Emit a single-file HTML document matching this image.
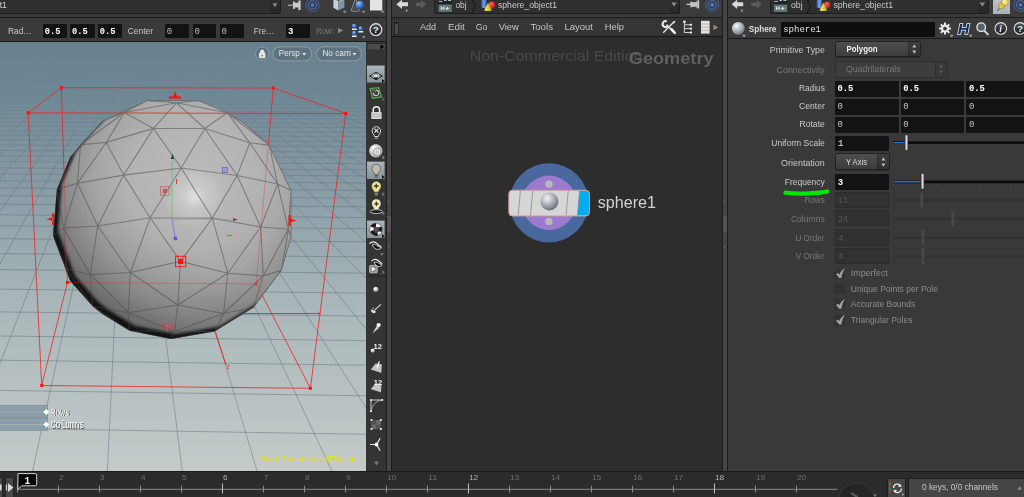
<!DOCTYPE html>
<html lang="en">
<head>
<meta charset="utf-8">
<title>Houdini - sphere1</title>
<style>
*{box-sizing:border-box;margin:0;padding:0}
html,body{width:1024px;height:497px;overflow:hidden;background:#1f1f1f}
body{position:relative;font-family:"Liberation Sans",sans-serif;font-size:9px;color:#cfcfcf;line-height:1}
.abs{position:absolute}
.t{position:absolute;white-space:nowrap;line-height:1}
.mono{font-family:"Liberation Mono",monospace}
.b{font-weight:bold}
.fld{position:absolute;background:#131313;border-radius:1px}
.pane{position:absolute;top:0;height:472px;overflow:hidden}
svg{will-change:transform}
#left{left:0;width:386px;background:#3a3a3a}
#mid{left:392px;width:330px;background:#2d2d2d}
#right{left:727px;width:297px;background:#3a3a3a}
.div{position:absolute;top:0;height:472px;background:#454545;border-left:1px solid #1c1c1c;border-right:1px solid #1c1c1c}
.row1{position:absolute;left:0;right:0;top:0;height:18px;background:#3b3b3b;border-bottom:1px solid #1d1d1d}
.path{position:absolute;top:-3px;height:16.600px;background:#2f2f2f;border:1px solid #1e1e1e;border-radius:2px}
.lbl{position:absolute;text-align:right;white-space:nowrap;color:#c8c8c8;font-size:9.5px}
.dim{color:#6d6d6d}
.dd{background:linear-gradient(#4e4e4e,#3d3d3d);border:1px solid #222;border-radius:2px;box-shadow:0 1px 0 #2a2a2a}
.dd i{position:absolute;top:0;bottom:0;right:0;background:rgba(0,0,0,.2);border-left:1px solid rgba(0,0,0,.2)}
.dd.off{background:#3d3d3d;border-color:#2e2e2e;box-shadow:none}
.dd.off i{background:rgba(0,0,0,.08)}
.fld.off{background:#313131;border:1px solid #2b2b2b}
.cb{width:10.600px;height:10.400px;background:#323232;border-radius:1px}
#timeline{position:absolute;left:0;top:471px;width:1024px;height:26px;background:#2b2b2b;border-top:1px solid #191919}
</style>
</head>
<body>

<!-- ================= LEFT PANE : scene viewer ================= -->
<div class="pane" id="left">
  <div class="row1"></div>
  <div class="path" style="left:-4px;width:284px"></div>
  <svg class="abs" style="left:0;top:0" width="20" height="14" viewBox="0 0 20 14"><text x="-0.300" y="8.200" font-family="Liberation Sans, sans-serif" font-size="9.500" fill="#d4d4d4" textLength="7.200" lengthAdjust="spacingAndGlyphs">t1</text></svg>
  <div class="abs" id="optrow" style="left:0;top:18px;width:386px;height:24px;background:#3a3a3a;border-bottom:1px solid #1b1b1b"></div>

  <div class="fld" style="left:43px;top:23.700px;width:24px;height:14.800px"></div>
  <div class="fld" style="left:70px;top:23.700px;width:24.600px;height:14.800px"></div>
  <div class="fld" style="left:98px;top:23.700px;width:24px;height:14.800px"></div>
  <div class="fld" style="left:165px;top:23.700px;width:23.800px;height:14.800px"></div>
  <div class="fld" style="left:192.600px;top:23.700px;width:23.600px;height:14.800px"></div>
  <div class="fld" style="left:219.500px;top:23.700px;width:24.400px;height:14.800px"></div>
  <div class="fld" style="left:286px;top:23.700px;width:24.300px;height:14.800px"></div>
  <svg class="abs" style="left:0;top:18px" width="340" height="24" viewBox="0 18 340 24" font-family="Liberation Sans, sans-serif" font-size="9.500">
    <text x="8" y="33.800" fill="#c8c8c8" textLength="23.600" lengthAdjust="spacingAndGlyphs">Rad…</text>
    <text x="127.800" y="33.800" fill="#c8c8c8" textLength="25.200" lengthAdjust="spacingAndGlyphs">Center</text>
    <text x="253.700" y="33.800" fill="#c8c8c8" textLength="20.700" lengthAdjust="spacingAndGlyphs">Fre…</text>
    <text x="316" y="33.600" fill="#787878" textLength="18" lengthAdjust="spacingAndGlyphs">Row:</text>
    <g font-family="Liberation Mono, monospace" font-size="9" font-weight="bold" fill="#fff">
      <text x="44.700" y="33.600" textLength="15.700" lengthAdjust="spacingAndGlyphs">0.5</text>
      <text x="72" y="33.600" textLength="15.700" lengthAdjust="spacingAndGlyphs">0.5</text>
      <text x="99.800" y="33.600" textLength="15.700" lengthAdjust="spacingAndGlyphs">0.5</text>
      <text x="288" y="33.600">3</text>
    </g>
    <g font-family="Liberation Mono, monospace" font-size="9" fill="#bdbdbd">
      <text x="166.800" y="33.600">0</text><text x="194.400" y="33.600">0</text><text x="221.600" y="33.600">0</text>
    </g>
  </svg>
  <div class="abs" style="left:269.400px;top:-3px;width:11.200px;height:16.600px;background:linear-gradient(#2e2e2e,#272727);border:1px solid #1c1c1c;border-left-color:#2a2a2a;border-radius:0 2px 2px 0"></div>
  <svg class="abs" style="left:260px;top:0" width="126" height="42" viewBox="260 0 126 42" font-family="Liberation Sans, sans-serif">
    <defs>
      <radialGradient id="bball" cx="0.35" cy="0.3" r="0.8"><stop offset="0" stop-color="#9cc4ff"/><stop offset="0.5" stop-color="#3f78d0"/><stop offset="1" stop-color="#173a80"/></radialGradient>
      <linearGradient id="qfill" x1="0" y1="0" x2="0" y2="1"><stop offset="0" stop-color="#515a62"/><stop offset="1" stop-color="#15181b"/></linearGradient>
    </defs>
    <path d="M272.500 3.200h4.800l-2.400 4z" fill="#8a8a8a"/>
    <!-- pin -->
    <path d="M288 5.200h5" stroke="#c8c8c8" stroke-width="1"/>
    <path d="M293 1.400h1.800v7.600h-1.800zM294.800 2.800h3.600v4.800h-3.600zM298.400 .4h2.200v9.600h-2.200z" fill="#cdcdcd"/>
    <!-- target -->
    <circle cx="312.500" cy="4.900" r="6.600" fill="none" stroke="#3f66a8" stroke-width="1"/>
    <circle cx="312.500" cy="4.900" r="4.200" fill="none" stroke="#4d78c0" stroke-width="1"/>
    <circle cx="312.500" cy="4.900" r="1.900" fill="#3f7be0"/>
    <!-- cube -->
    <path d="M333.400 -1l4.800 2.400v9l-4.800-2.600z" fill="#c4d2dc"/>
    <path d="M338.200 1.400l6.200-2.400v8.600l-6.200 2.800z" fill="#7f95a6"/>
    <path d="M333.400 -1l4.800 2.400l6.200-2.400" fill="none" stroke="#e4ecf0" stroke-width="0.600"/>
    <path d="M342.700 10.700h4l-2 2.600z" fill="#8c8c8c"/>
    <!-- cone + ball -->
    <path d="M355.600 -2l4 12.600c-2.400 1.400-6.400 1.400-8.600 0z" fill="#4a4a4a" stroke="#9a9a9a" stroke-width="0.800"/>
    <circle cx="359.900" cy="5" r="4.300" fill="url(#bball)"/>
    <path d="M361.500 10.700h4l-2 2.600z" fill="#8c8c8c"/>
    <!-- white pane -->
    <rect x="370" y="-1" width="12.300" height="11.500" fill="#e4e4e0"/>
    <path d="M380.600 10.700h4l-2 2.600z" fill="#8c8c8c"/>
    <!-- row 2 -->
    <path d="M338 28l5.300 2.600l-5.300 2.600z" fill="#858585"/>
    <g>
      <circle cx="354.300" cy="26.100" r="2.300" fill="url(#bball)"/><rect x="352" y="28.500" width="4.800" height="1.500" fill="#e8eef4"/>
      <circle cx="360.700" cy="28.600" r="2.300" fill="url(#bball)"/><rect x="358.400" y="31" width="4.800" height="1.500" fill="#e8eef4"/>
      <circle cx="354.300" cy="33.100" r="2.300" fill="url(#bball)"/><rect x="352" y="35.500" width="4.800" height="1.500" fill="#e8eef4"/>
    </g>
    <path d="M361.800 36.200h4l-2 2.600z" fill="#8c8c8c"/>
    <circle cx="375.900" cy="29.600" r="5.900" fill="url(#qfill)" stroke="#eaeaea" stroke-width="1.200"/>
    <text x="373.100" y="33.200" font-size="9.500" font-weight="bold" fill="#f2f2f2">?</text>
  </svg>
  <!-- viewport -->
  <svg class="abs" style="left:0;top:0" width="366" height="472" viewBox="0 0 366 472">
    <defs>
      <linearGradient id="bg" x1="0" y1="42" x2="0" y2="471" gradientUnits="userSpaceOnUse">
        <stop offset="0" stop-color="#66808f"/>
        <stop offset="0.25" stop-color="#7d939f"/>
        <stop offset="0.6" stop-color="#a9b6b9"/>
        <stop offset="1" stop-color="#c4cbc9"/>
      </linearGradient>
      <linearGradient id="gfade" x1="0" y1="62" x2="0" y2="230" gradientUnits="userSpaceOnUse">
        <stop offset="0" stop-color="#fff" stop-opacity="0"/>
        <stop offset="0.22" stop-color="#fff" stop-opacity="0.3"/>
        <stop offset="0.5" stop-color="#fff" stop-opacity="0.75"/>
        <stop offset="1" stop-color="#fff" stop-opacity="1"/>
      </linearGradient>
      <mask id="gm" maskUnits="userSpaceOnUse" x="0" y="42" width="366" height="430"><rect x="0" y="42" width="366" height="430" fill="url(#gfade)"/></mask>
      <radialGradient id="sph" cx="187" cy="188" r="160" gradientUnits="userSpaceOnUse">
        <stop offset="0" stop-color="#bcbcbc"/>
        <stop offset="0.4" stop-color="#b4b4b4"/>
        <stop offset="0.6" stop-color="#a7a7a7"/>
        <stop offset="0.8" stop-color="#8f8f8f"/>
        <stop offset="1" stop-color="#727272"/>
      </radialGradient>
      <linearGradient id="shd" x1="240" y1="140" x2="108" y2="332" gradientUnits="userSpaceOnUse">
        <stop offset="0" stop-color="#000" stop-opacity="0"/>
        <stop offset="0.5" stop-color="#000" stop-opacity="0.01"/>
        <stop offset="0.8" stop-color="#000" stop-opacity="0.08"/>
        <stop offset="1" stop-color="#000" stop-opacity="0.2"/>
      </linearGradient>
      <filter id="soft" x="-10%" y="-10%" width="120%" height="120%"><feGaussianBlur stdDeviation="1.400"/></filter>
      <radialGradient id="hl" cx="194.500" cy="197" r="32" gradientUnits="userSpaceOnUse">
        <stop offset="0" stop-color="#fff" stop-opacity="0.56"/>
        <stop offset="0.35" stop-color="#fff" stop-opacity="0.24"/>
        <stop offset="1" stop-color="#fff" stop-opacity="0"/>
      </radialGradient>
      <clipPath id="hullclip"><polygon points="53,235.7 56.8,189.5 70.3,157.1 80.5,144.8 102.7,121.1 147.1,100.6 199.2,100.7 227.3,112.7 242.1,121.5 269.4,145.4 291.1,190.5 291.2,237.1 281.5,270.2 253.5,307.5 214.5,331.4 171,339.1 129.6,330.7 102.4,313.9 92.6,306.2 70,280.7"/></clipPath>
      <clipPath id="vp"><rect x="0" y="42" width="366" height="429"/></clipPath>
    </defs>
    <g clip-path="url(#vp)">
      <rect x="0" y="42" width="366" height="430" fill="url(#bg)"/>
      <path mask="url(#gm)" d="M0.4 60L-2 60.4M4.4 60L-2 61.2M8.3 60L-2 62M12.3 60L-2 62.8M16.2 60L-2 63.7M20.2 60L-2 64.7M24.2 60L-2 65.8M28.1 60L-2 66.9M32.1 60L-2 68.1M36.1 60L-2 69.5M40 60L-2 70.9M44 60L-2 72.5M48 60L-2 74.3M51.9 60L-2 76.2M55.9 60L-2 78.4M59.9 60L-2 80.8M63.8 60L-2 83.5M67.8 60L-2 86.5M71.8 60L-2 90M75.7 60L-2 93.9M79.7 60L-2 98.6M83.7 60L-2 104M87.6 60L-2 110.6M91.6 60L-2 118.5M95.6 60L-2 128.3M99.5 60L-2 140.9M103.5 60L-2 157.4M107.5 60L-2 180.2M111.4 60L-2 213.7M115.4 60L-2 267.5M119.4 60L-2 368.5M123.3 60L32.3 472M127.3 60L107.3 472M131.2 60L182.3 472M135.2 60L257.3 472M139.2 60L332.3 472M143.1 60L368 410.7M147.1 60L368 331.5M151.1 60L368 280M155 60L368 243.8M159 60L368 217M163 60L368 196.4M166.9 60L368 180M170.9 60L368 166.7M174.9 60L368 155.6M178.8 60L368 146.3M182.8 60L368 138.3M186.8 60L368 131.4M190.7 60L368 125.4M194.7 60L368 120.1M198.7 60L368 115.4M202.6 60L368 111.2M206.6 60L368 107.5M210.6 60L368 104.1M214.5 60L368 101M218.5 60L368 98.2M222.5 60L368 95.6M226.4 60L368 93.2M230.4 60L368 91M234.4 60L368 89M238.3 60L368 87.1M242.3 60L368 85.4M246.2 60L368 83.8M250.2 60L368 82.2M254.2 60L368 80.8M258.1 60L368 79.5M262.1 60L368 78.2M266.1 60L368 77M270 60L368 75.9M274 60L368 74.8M278 60L368 73.8M281.9 60L368 72.9M285.9 60L368 72M289.9 60L368 71.1M293.8 60L368 70.3M297.8 60L368 69.5M301.8 60L368 68.8M305.7 60L368 68.1M309.7 60L368 67.4M0 107.2L366 108.3M0 110.6L366 111.7M0 114.3L366 115.5M0 118.1L366 119.3M0 122L366 123.3M0 126.3L366 127.7M0 130.8L366 132.2M0 135L366 136.5M0 139.9L366 141.5M0 144.9L366 146.6M0 150.5L366 152.2M0 156L366 157.8M0 161.8L366 163.7M0 167.9L366 169.9M0 173.9L366 176M0 180.8L366 183M0 188L366 190.3M0 195.7L366 198.1M0 204.2L366 206.8M0 214.8L366 217.5M0 225.8L366 228.7M0 238.7L366 241.8M0 253.6L366 256.9M0 269.6L366 273.2M0 289.2L366 293.1M0 311.9L366 316.1M0 336L366 340.6M0 360.2L366 365.2M0 390.4L366 395.8M0 428.3L366 434.3M0 475L366 481.7M0 103.9L366 104.9M0 100.8L366 101.8M0 97.9L366 98.8M0 95.1L366 96M0 92.6L366 93.4M0 90.1L366 91M0 87.9L366 88.6M0 85.7L366 86.5M0 83.7L366 84.4M0 81.8L366 82.5M0 80L366 80.7M0 78.4L366 79M0 76.8L366 77.4M0 75.3L366 75.9M0 73.9L366 74.5M0 72.6L366 73.2" stroke="#5c6e78" stroke-opacity="0.46" stroke-width="1" fill="none"/>
      <path d="M61.4 87.7L273.3 88M273.3 88L345.7 113.5M345.7 113.5L28.2 112.8M28.2 112.8L61.4 87.7M67.4 282.5L256.3 283.9M256.3 283.9L310.4 388.3M310.4 388.3L41.7 385.5M41.7 385.5L67.4 282.5M61.4 87.7L67.4 282.5M273.3 88L256.3 283.9M345.7 113.5L310.4 388.3M28.2 112.8L41.7 385.5" stroke="#ee2020" stroke-opacity="0.92" stroke-width="0.85" fill="none"/>
      <!-- floor axis lines -->
      <path d="M171 313.5H319.5M202 292L226 365" stroke="#f02020" stroke-width="0.9" fill="none"/>
      <polygon points="53,235.7 56.8,189.5 70.3,157.1 80.5,144.8 102.7,121.1 147.1,100.6 199.2,100.7 227.3,112.7 242.1,121.5 269.4,145.4 291.1,190.5 291.2,237.1 281.5,270.2 253.5,307.5 214.5,331.4 171,339.1 129.6,330.7 102.4,313.9 92.6,306.2 70,280.7" fill="#161616"/>
      <g clip-path="url(#hullclip)">
        <g filter="url(#soft)">
          <polygon points="53,235.7 56.8,189.5 70.3,157.1 80.5,144.8 102.7,121.1 147.1,100.6 199.2,100.7 227.3,112.7 242.1,121.5 269.4,145.4 291.1,190.5 291.2,237.1 281.5,270.2 253.5,307.5 214.5,331.4 171,339.1 129.6,330.7 102.4,313.9 92.6,306.2 70,280.7" fill="url(#sph)" transform="translate(12 -12)"/>
          <polygon points="53,235.7 56.8,189.5 70.3,157.1 80.5,144.8 102.7,121.1 147.1,100.6 199.2,100.7 227.3,112.7 242.1,121.5 269.4,145.4 291.1,190.5 291.2,237.1 281.5,270.2 253.5,307.5 214.5,331.4 171,339.1 129.6,330.7 102.4,313.9 92.6,306.2 70,280.7" fill="url(#sph)" transform="translate(5 -5)"/>
        </g>
        <polygon points="53,235.7 56.8,189.5 70.3,157.1 80.5,144.8 102.7,121.1 147.1,100.6 199.2,100.7 227.3,112.7 242.1,121.5 269.4,145.4 291.1,190.5 291.2,237.1 281.5,270.2 253.5,307.5 214.5,331.4 171,339.1 129.6,330.7 102.4,313.9 92.6,306.2 70,280.7" fill="url(#shd)"/>
        <polygon points="53,235.7 56.8,189.5 70.3,157.1 80.5,144.8 102.7,121.1 147.1,100.6 199.2,100.7 227.3,112.7 242.1,121.5 269.4,145.4 291.1,190.5 291.2,237.1 281.5,270.2 253.5,307.5 214.5,331.4 171,339.1 129.6,330.7 102.4,313.9 92.6,306.2 70,280.7" fill="url(#hl)"/>
        <path d="M281.5 270.2L253.5 307.5M281.5 270.2L263.2 275.9M281.5 270.2L288.4 229.3M281.5 270.2L291.2 237.1M253.5 307.5L214.5 331.4M253.5 307.5L263.2 275.9M253.5 307.5L223.6 313.5M214.5 331.4L171 339.1M214.5 331.4L223.6 313.5M214.5 331.4L174.4 331.5M171 339.1L174.4 331.5M171 339.1L129.6 330.7M263.2 275.9L223.6 313.5M263.2 275.9L227.8 273.2M263.2 275.9L288.4 229.3M263.2 275.9L260.7 227M223.6 313.5L174.4 331.5M223.6 313.5L227.8 273.2M223.6 313.5L177.8 305M174.4 331.5L177.8 305M174.4 331.5L129.6 330.7M174.4 331.5L128.1 312.7M227.8 273.2L177.8 305M227.8 273.2L180.4 261.4M227.8 273.2L260.7 227M227.8 273.2L212.3 218.1M177.8 305L180.4 261.4M177.8 305L128.1 312.7M177.8 305L130.4 272.5M180.4 261.4L130.4 272.5M180.4 261.4L212.3 218.1M180.4 261.4L150.1 217.8M66.1 268.7L92.6 306.2M66.1 268.7L90.3 274.7M66.1 268.7L63.6 228M66.1 268.7L70 280.7M66.1 268.7L53 235.7M92.6 306.2L129.6 330.7M92.6 306.2L90.3 274.7M92.6 306.2L128.1 312.7M92.6 306.2L70 280.7M92.6 306.2L102.4 313.9M129.6 330.7L128.1 312.7M129.6 330.7L102.4 313.9M90.3 274.7L128.1 312.7M90.3 274.7L130.4 272.5M90.3 274.7L63.6 228M90.3 274.7L97.7 226M128.1 312.7L130.4 272.5M130.4 272.5L150.1 217.8M130.4 272.5L97.7 226M249.8 142.8L277.6 184M249.8 142.8L237.1 175.5M249.8 142.8L204.8 128.5M249.8 142.8L269.4 145.4M249.8 142.8L227.3 112.7M277.6 184L288.4 229.3M277.6 184L237.1 175.5M277.6 184L260.7 227M277.6 184L269.4 145.4M277.6 184L291.1 190.5M288.4 229.3L260.7 227M288.4 229.3L291.1 190.5M288.4 229.3L291.2 237.1M237.1 175.5L260.7 227M237.1 175.5L212.3 218.1M237.1 175.5L204.8 128.5M237.1 175.5L181.2 168M260.7 227L212.3 218.1M212.3 218.1L181.2 168M212.3 218.1L150.1 217.8M106.3 142.4L153.5 128.4M106.3 142.4L123.6 175.1M106.3 142.4L77.5 183.2M106.3 142.4L124.3 112.5M106.3 142.4L80.5 144.8M153.5 128.4L204.8 128.5M153.5 128.4L123.6 175.1M153.5 128.4L181.2 168M153.5 128.4L124.3 112.5M153.5 128.4L176.4 102.8M204.8 128.5L181.2 168M204.8 128.5L176.4 102.8M204.8 128.5L227.3 112.7M123.6 175.1L181.2 168M123.6 175.1L150.1 217.8M123.6 175.1L77.5 183.2M123.6 175.1L97.7 226M181.2 168L150.1 217.8M150.1 217.8L97.7 226M63.6 228L77.5 183.2M63.6 228L97.7 226M63.6 228L53 235.7M63.6 228L56.8 189.5M77.5 183.2L97.7 226M77.5 183.2L56.8 189.5M77.5 183.2L80.5 144.8M70 280.7L53 235.7M269.4 145.4L291.1 190.5M269.4 145.4L227.3 112.7M269.4 145.4L242.1 121.5M291.1 190.5L291.2 237.1M147.1 100.6L124.3 112.5M147.1 100.6L199.2 100.7M147.1 100.6L176.4 102.8M147.1 100.6L102.7 121.1M124.3 112.5L176.4 102.8M124.3 112.5L80.5 144.8M124.3 112.5L102.7 121.1M199.2 100.7L176.4 102.8M199.2 100.7L227.3 112.7M176.4 102.8L227.3 112.7M227.3 112.7L242.1 121.5M53 235.7L56.8 189.5M70.3 157.1L56.8 189.5M70.3 157.1L80.5 144.8M56.8 189.5L80.5 144.8M80.5 144.8L102.7 121.1" stroke="#4a4a4a" stroke-opacity="0.5" stroke-width="1.100" fill="none"/>
      </g>
      <!-- hidden box lines seen through -->
      <g clip-path="url(#hullclip)">
        <path d="M61.4 87.7L273.3 88M67.4 282.5L256.3 283.9M256.3 283.9L310.4 388.3M41.7 385.5L67.4 282.5M61.4 87.7L67.4 282.5M273.3 88L256.3 283.9" stroke="#ee2020" stroke-opacity="0.36" stroke-width="0.9" fill="none"/>
        <path d="M345.7 113.5L28.2 112.8M345.7 113.5L310.4 388.3M28.2 112.8L41.7 385.5M310.4 388.3L41.7 385.5M273.3 88L345.7 113.5M61.4 87.7L28.2 112.8" stroke="#ee2020" stroke-opacity="0.92" stroke-width="0.85" fill="none"/>
      </g>
      <g fill="#ff1010"><rect x="59.9" y="86.2" width="3" height="3"/><rect x="271.8" y="86.5" width="3" height="3"/><rect x="344.2" y="112" width="3" height="3"/><rect x="26.7" y="111.3" width="3" height="3"/><rect x="65.9" y="281" width="3" height="3"/><rect x="254.8" y="282.4" width="3" height="3" fill-opacity="0.4"/><rect x="308.9" y="386.8" width="3" height="3"/><rect x="40.2" y="384" width="3" height="3"/></g>
      <text x="318" y="314.5" font-size="6" fill="#f03030" font-family="Liberation Sans, sans-serif">x</text>
      <text x="226.5" y="369" font-size="6.5" fill="#f03030" font-family="Liberation Sans, sans-serif">z</text>
      <!-- box handles -->
      <g fill="#ff1010">
        <path d="M169 96.4h12v2.2h-12zM172.4 97c1.8-1.6 2.4-4 2.8-6.8c.4 2.800 1 5.200 2.800 6.800z"/>
        <path d="M52 213.200h2.200v11.800h-2.200zM52.600 216.600c-1.600 1.600-4 2.200-6.800 2.600c2.800.4 5.200 1 6.800 2.600z"/>
        <path d="M288.600 215h2v11h-2zM290 217.800c1.600 1.600 4 2.200 7 2.600c-3 .4-5.400 1-7 2.600z"/>
        <path d="M178 258.800h5.200v5.200h-5.200z"/>
      </g>
      <rect x="175.500" y="256.300" width="10.200" height="10.400" fill="none" stroke="#ff1818" stroke-width="1"/>
      <g opacity="0.55">
        <rect x="162.500" y="188.700" width="4.600" height="4.600" fill="#c02020"/>
        <rect x="160.500" y="186.700" width="8.600" height="8.600" fill="none" stroke="#d03030" stroke-width="0.9"/>
        <rect x="162.700" y="324.300" width="9.800" height="4" fill="none" stroke="#e83a3a" stroke-width="0.700"/><path d="M165 325.200h5v2.300h-5zM165.600 328.300h3.800l-1.900 4.200z" fill="#ff4a4a"/>
      </g>
      <!-- transform gizmo -->
      <path d="M172 219.500V159" stroke="#48b848" stroke-opacity="0.6" stroke-width="0.9" fill="none"/>
      <path d="M172.600 153.500l1.600 5.500h-3.600z" fill="#1f4f1f"/>
      <path d="M172 219.500L233 219.400" stroke="#d87070" stroke-opacity="0.5" stroke-width="0.9" fill="none"/>
      <path d="M233 218.200l5 1.400l-5 1.400z" fill="#8a3030"/>
      <path d="M172 219.500L175.300 237.500" stroke="#6a6ae0" stroke-opacity="0.8" stroke-width="0.9" fill="none"/>
      <rect x="173.700" y="236.800" width="3.400" height="3.400" fill="#5a5ad0"/>
      <rect x="222.300" y="167.500" width="5" height="5" fill="#8080d8" fill-opacity="0.45" stroke="#6868c8" stroke-width="0.8"/>
      <path d="M176.600 178.800v5.400" stroke="#d03838" stroke-width="1"/>
      <path d="M226.800 235.500h5.600" stroke="#38b838" stroke-width="1.200"/>
      <!-- rows / columns HUD sliders -->
      <rect x="-1" y="405.500" width="48.500" height="12.400" fill="#8a9fab" stroke="#8c8c8c" stroke-width="0.8"/>
      <rect x="-1" y="417.900" width="48.500" height="12.400" fill="#8a9fab" stroke="#8c8c8c" stroke-width="0.8"/>
      <path d="M0 412H46M0 424.500H46" stroke="#a9aeb0" stroke-width="1.200"/>
      <path d="M43.300 412l3-3l3 3l-3 3zM43.300 424.500l3-3l3 3l-3 3z" fill="#fff"/>
      <g font-family="Liberation Mono, monospace" font-size="10">
        <text x="51.700" y="416.300" fill="#3c3c3c" textLength="18.700" lengthAdjust="spacingAndGlyphs">Rows</text><text x="51" y="415.600" fill="#fff" textLength="18.700" lengthAdjust="spacingAndGlyphs">Rows</text>
        <text x="51.700" y="428.600" fill="#3c3c3c" textLength="33.400" lengthAdjust="spacingAndGlyphs">Columns</text><text x="51" y="427.900" fill="#fff" textLength="33.400" lengthAdjust="spacingAndGlyphs">Columns</text>
      </g>
      <text x="261.700" y="462" font-size="9" fill="#e6e600" font-family="Liberation Sans, sans-serif" textLength="94.500" lengthAdjust="spacingAndGlyphs">Non-Commercial Edition</text>
      <!-- view buttons -->
      <circle cx="262.200" cy="53.700" r="6.700" fill="#5c707d" stroke="#8d9ca6" stroke-width="0.9"/>
      <path d="M259.400 53.200h5.600v4.600h-5.600zM260.400 53.200v-1.400a1.800 1.800 0 0 1 3.600 0v1.400" fill="#e4e8ea" stroke="#e4e8ea" stroke-width="0.9" fill-rule="evenodd"/>
      <path d="M261.600 54.400l1.800 1.200l-1.800 1.200z" fill="#5c707d"/>
      <rect x="273" y="46.800" width="38.600" height="14" rx="7" fill="#5e727f" stroke="#93a2ab" stroke-width="0.9"/>
      <rect x="316.600" y="46.800" width="45" height="14" rx="7" fill="#5e727f" stroke="#93a2ab" stroke-width="0.9"/>
      <g font-family="Liberation Sans, sans-serif" font-size="9" fill="#e2e7ea">
        <text x="278.800" y="56.300" textLength="21" lengthAdjust="spacingAndGlyphs">Persp</text>
        <text x="322.400" y="56.300" textLength="28.400" lengthAdjust="spacingAndGlyphs">No cam</text>
      </g>
      <path d="M302.200 53h4l-2 2.400zM352.400 53h4l-2 2.400z" fill="#e2e7ea"/>
    </g>
  </svg>

  <div class="abs" id="vtools" style="left:366px;top:42px;width:20px;height:430px;background:#343434"></div>
  <svg class="abs" style="left:366px;top:42px" width="20" height="430" viewBox="366 42 20 430">
    <defs>
      <linearGradient id="hib" x1="0" y1="0" x2="0" y2="1"><stop offset="0" stop-color="#aab6ba"/><stop offset="1" stop-color="#87949a"/></linearGradient>
      <radialGradient id="ball" cx="0.35" cy="0.3" r="0.8"><stop offset="0" stop-color="#ffffff"/><stop offset="1" stop-color="#9a9a9a"/></radialGradient>
    </defs>
    <!-- top scroll nub -->
    <rect x="367" y="43.500" width="18.500" height="6.500" fill="#4a4a4a" stroke="#222" stroke-width="0.6"/>
    <path d="M380.500 44.300l3.600 2.500l-3.600 2.500z" fill="#000"/>
    <!-- 1 construction plane (active) -->
    <rect x="367" y="65.500" width="17.600" height="17" fill="url(#hib)"/>
    <path d="M369.500 76l6.500-3.600l6.500 3.600l-6.500 3.600z" fill="none" stroke="#1a1a1a" stroke-width="1"/>
    <path d="M372.700 74.200l6.500 3.600M379.300 74.200l-6.500 3.600" stroke="#f4f4f4" stroke-width="0.8"/>
    <path d="M374 77.600l2 1.400l2-1.400" stroke="#111" stroke-width="1.200" fill="none"/>
    <path d="M382 79l2.600 2l-2.600 2z" fill="#111"/>
    <!-- 2 green snap -->
    <path d="M370.200 88.600l8.400-1l2.800 9.400l-8.800 1.200z" fill="none" stroke="#58a848" stroke-width="1.300"/>
    <path d="M373.300 92.800a2.700 2.700 0 1 0 2.700-2.600" fill="none" stroke="#c8c8c8" stroke-width="1.300"/>
    <path d="M371.800 90.200h3.400v2.600" fill="none" stroke="#8a8a8a" stroke-width="1"/>
    <path d="M382.300 97.200l2.500 2l-2.500 2z" fill="#666"/>
    <!-- 3 lock -->
    <path d="M373.200 112.500v-2.500a3.200 3.200 0 0 1 6.400 0v2.500" fill="none" stroke="#f2f2f2" stroke-width="1.500"/>
    <rect x="371.200" y="112" width="10.400" height="7" rx="0.800" fill="#d6d6d0"/>
    <path d="M371.200 114.400h10.400M371.200 116.600h10.400" stroke="#a8a8a0" stroke-width="0.700"/>
    <!-- 4 bulb X -->
    <path d="M374.500 136.500c0-2-2.300-2.800-2.300-5.600a4.200 4.200 0 0 1 8.400 0c0 2.800-2.300 3.600-2.300 5.600z" fill="#2a2a2a" stroke="#dcdcdc" stroke-width="1"/>
    <path d="M374.400 128.600l4 4M378.400 128.600l-4 4" stroke="#f0f0f0" stroke-width="1.100"/>
    <path d="M374.700 138.200h3.400" stroke="#bbb" stroke-width="1"/>
    <!-- 5 sphere eye -->
    <circle cx="375.800" cy="150.800" r="6.300" fill="url(#ball)" stroke="#e8e8e8" stroke-width="0.600"/>
    <circle cx="377.200" cy="151.800" r="3.700" fill="#f2f2f2" stroke="#777" stroke-width="0.700"/>
    <path d="M376.200 149.800v4M378.200 149.800v4" stroke="#888" stroke-width="0.700"/>
    <path d="M382.300 155.500l2.500 2l-2.500 2z" fill="#888"/>
    <!-- 6 bulb (active) -->
    <rect x="367" y="161.600" width="17.600" height="17.400" fill="url(#hib)"/>
    <path d="M374.400 174.300c0-2-2.400-2.900-2.400-5.700a4.300 4.300 0 0 1 8.600 0c0 2.800-2.400 3.700-2.400 5.700z" fill="#bcbcac" stroke="#55554c" stroke-width="0.700"/>
    <path d="M374.600 175.600h3.600M374.900 177h3" stroke="#4a4a44" stroke-width="0.900"/>
    <path d="M382 175l2.600 2l-2.600 2z" fill="#111"/>
    <!-- 7 yellow bulb -->
    <path d="M374.400 191.600c0-1.800-2.400-2.700-2.400-5.500a4.300 4.300 0 0 1 8.600 0c0 2.800-2.400 3.700-2.400 5.500z" fill="#ece48a" stroke="#f4f0b0" stroke-width="0.500"/>
    <path d="M374 186h4.600M376.300 183.700v4.600" stroke="#3a3a2a" stroke-width="1.300"/>
    <path d="M374.600 193.200h3.600M374.900 194.800h3" stroke="#aaa" stroke-width="0.900"/>
    <path d="M382.300 192.200l2.500 2l-2.500 2z" fill="#777"/>
    <!-- 8 bulb + ring -->
    <path d="M374.400 209c0-1.800-2.200-2.700-2.200-5.300a4.100 4.100 0 0 1 8.200 0c0 2.600-2.200 3.500-2.200 5.300z" fill="#eeeab0" stroke="#fafadc" stroke-width="0.500"/>
    <path d="M374.200 203.800h4.400M376.400 201.600v4.400" stroke="#333" stroke-width="1.300"/>
    <ellipse cx="376.300" cy="211.600" rx="6.200" ry="1.900" fill="#1a1a1a" stroke="#cfcfcf" stroke-width="0.900"/>
    <path d="M382.500 211.300l2.400 2l-2.400 2z" fill="#888"/>
    <!-- 9 checker sphere (active) -->
    <rect x="367" y="220.600" width="17.600" height="17.400" fill="url(#hib)"/>
    <circle cx="376" cy="229.500" r="6.300" fill="#f4f4f4" stroke="#333" stroke-width="0.500"/>
    <path d="M376 223.200a6.300 6.300 0 0 0-5.500 3.200l3.500 1.400l2-1.200zM381.500 226.400a6.300 6.300 0 0 1 .3 5.400l-3.300-.6v-3.800zM370.300 231.800a6.300 6.300 0 0 0 4.300 3.800l.4-3.400l-2-2.200zM378 235.400l-.5-3.200l-2.500 0l-.4 3.400a6.300 6.300 0 0 0 3.400-.2z" fill="#1a1a1a"/>
    <rect x="374" y="227.300" width="4.600" height="4.600" fill="#555" stroke="#222" stroke-width="0.500"/>
    <path d="M382 234.200l2.600 2l-2.600 2z" fill="#111"/>
    <!-- 10 glasses -->
    <path d="M369.500 243.800c1-1.800 4-2.400 6-1.200l6 4.800" fill="none" stroke="#ececec" stroke-width="1.200"/>
    <path d="M372 245c1.400-.8 3.400-.6 4.600.6l4.800 2.200c-1.200 1.800-4.600 2-6.400.8z" fill="#0c0c0c" stroke="#e8e8e8" stroke-width="0.800"/>
    <path d="M379.600 253.200h4.600l-2.300 2.600z" fill="#777"/>
    <!-- 11 glasses + flipbook -->
    <path d="M371.500 261.200c1-1.800 4-2.400 6-1.200l4.600 3.800" fill="none" stroke="#ececec" stroke-width="1.200"/>
    <path d="M374 262.600c1.400-.8 3.200-.6 4.400.6l3.800 1.800c-1.200 1.800-4 2-5.800.8z" fill="#0c0c0c" stroke="#e8e8e8" stroke-width="0.800"/>
    <rect x="369.600" y="265.400" width="7.600" height="7.400" rx="0.800" fill="#8e8e8e" stroke="#d8d8d8" stroke-width="0.700"/>
    <path d="M371.800 266.900l3.800 2.200l-3.800 2.200z" fill="#fff"/>
    <path d="M382.400 270.300l2.500 2l-2.500 2z" fill="#777"/>
    <path d="M367 276h19" stroke="#242424" stroke-width="1"/>
    <!-- 12 point -->
    <circle cx="375.800" cy="289.300" r="2.500" fill="url(#ball)"/>
    <!-- 13 normal -->
    <path d="M374.200 310.400l6.800-6" stroke="#e0e0e0" stroke-width="1.100"/>
    <path d="M371.600 309.200a2.600 2.600 0 0 0 4.600 2.600z" fill="#e4e4e4"/>
    <path d="M372 309a2.800 2.800 0 0 1 2-1.200" stroke="#bbb" stroke-width="0.800" fill="none"/>
    <!-- 14 pen -->
    <path d="M372.400 333.400l4.200-7.400l2.800 1.800z" fill="#c8c8c8"/>
    <circle cx="378.600" cy="325" r="2.100" fill="#f6f6f6"/>
    <!-- 15 point numbers -->
    <circle cx="372.700" cy="350.600" r="2.100" fill="url(#ball)"/>
    <text x="373.600" y="348.800" font-family="Liberation Sans, sans-serif" font-weight="bold" font-size="7.500" fill="#f4f4f4" textLength="8.400" lengthAdjust="spacingAndGlyphs">12</text>
    <!-- 16 prim normal -->
    <path d="M371 369.200l4.600-5.600l5.800 .6l-.4 8.200z" fill="#c4c4c0"/>
    <path d="M371 369.200l10 3.200l.4-8.200" fill="none" stroke="#e8e8e8" stroke-width="0.500"/>
    <path d="M377 368.400l2.200-7" stroke="#fff" stroke-width="1.300"/>
    <!-- 17 prim numbers -->
    <path d="M371 388.800l4.600-5.400l5.800 .6l-.4 8z" fill="#c4c4c0"/>
    <path d="M371 388.800l10 3.200" fill="none" stroke="#e8e8e8" stroke-width="0.500"/>
    <text x="373.800" y="385" font-family="Liberation Sans, sans-serif" font-weight="bold" font-size="7.500" fill="#f4f4f4" textLength="8.400" lengthAdjust="spacingAndGlyphs">12</text>
    <!-- 18 hull -->
    <path d="M371 411.500v-11.500h11.500" fill="none" stroke="#c9c9c9" stroke-width="1"/>
    <path d="M382.500 400c-6.500 .800-10.500 5-11.500 11.500" fill="none" stroke="#b5b5b5" stroke-width="0.900"/>
    <g fill="#f0f0f0"><circle cx="371" cy="400" r="1"/><circle cx="382.300" cy="400" r="1"/><circle cx="371" cy="411.300" r="1"/></g>
    <!-- 19 uv -->
    <rect x="371.500" y="420" width="9.400" height="9" fill="#6a6d66"/>
    <rect x="371.500" y="420" width="4.700" height="4.500" fill="#50524e"/><rect x="376.200" y="424.500" width="4.700" height="4.500" fill="#50524e"/>
    <g fill="#f4f4f4"><circle cx="371.500" cy="420" r="1.100"/><circle cx="380.900" cy="420" r="1.100"/><circle cx="371.500" cy="429" r="1.100"/><circle cx="380.900" cy="429" r="1.100"/></g>
    <!-- 20 -->
    <path d="M376.500 444.500h-6.500M376.500 444.500l3.700-6.200M376.500 444.500l3.700 6.200" stroke="#ececec" stroke-width="1.200"/>
    <circle cx="376.500" cy="444.500" r="1.900" fill="#fff"/>
    <!-- more -->
    <path d="M374 461.500h5l-2.500 4z" fill="#787878"/>
  </svg>
</div>


<!-- ================= MIDDLE PANE : network ================= -->
<div class="pane" id="mid">
  <div class="row1"></div>
  <div class="path" style="left:42px;width:246px"></div>
  <div class="abs" style="left:277.500px;top:-3px;width:10.500px;height:16.600px;background:linear-gradient(#2e2e2e,#272727);border:1px solid #1c1c1c;border-left-color:#2a2a2a;border-radius:0 2px 2px 0"></div>
  <div class="abs" id="menurow" style="left:0;top:18px;width:330px;height:19px;background:#353535;border-bottom:1px solid #161616"></div>
  <div class="abs" style="left:1.500px;top:19px;width:5.500px;height:16px;background:#4b4b4b;border:1px solid #262626"></div>
  <svg class="abs" style="left:0;top:0" width="330" height="472" viewBox="392 0 330 472" font-family="Liberation Sans, sans-serif">
    <defs>
      <radialGradient id="nball" cx="0.38" cy="0.32" r="0.75"><stop offset="0" stop-color="#f4f6f8"/><stop offset="0.5" stop-color="#a9afb5"/><stop offset="1" stop-color="#5d646b"/></radialGradient>
      <linearGradient id="cyl" x1="0" y1="0" x2="1" y2="0"><stop offset="0" stop-color="#2d57a8"/><stop offset="0.5" stop-color="#7aa4e6"/><stop offset="1" stop-color="#2d57a8"/></linearGradient>
      <linearGradient id="cone" x1="0" y1="0" x2="1" y2="0"><stop offset="0" stop-color="#fff27a"/><stop offset="1" stop-color="#c7a800"/></linearGradient>
      <radialGradient id="rball" cx="0.4" cy="0.35" r="0.7"><stop offset="0" stop-color="#ff6a5a"/><stop offset="1" stop-color="#b51208"/></radialGradient>
    </defs>
    <!-- nav arrows -->
    <path d="M396.400 4.300l5.600-4.600v2.600h6v4h-6v2.600z" fill="#dadada"/>
    <path d="M405.800 8.800l2.600 1.800l-2.600 1.800z" fill="#8c8c8c"/>
    <path d="M426.400 4.300l-5.200-4.300v2.400h-5.400v3.800h5.400v2.400z" fill="#5c5c5c"/>
    <!-- obj icon -->
    <rect x="438.600" y="-1" width="13.200" height="5.600" fill="#1f2224"/>
    <path d="M439 1.400h3.400M444 .4h2.600M448 .4h3" stroke="#c9d0d2" stroke-width="1"/>
    <rect x="438.600" y="4.600" width="13.200" height="7.200" fill="#65777a"/>
    <path d="M441.200 6.400v3.600M443.800 6.400v3.600M441.200 8.200h2.600M445.600 8.400h3.400M447.300 6.800v3.200" stroke="#e6eced" stroke-width="0.900"/>
    <text x="455.400" y="8.200" font-size="9.500" fill="#cacaca" textLength="11.300" lengthAdjust="spacingAndGlyphs">obj</text>
    <path d="M471.600 -1l3.800 6.600l-3.800 8" fill="none" stroke="#191919" stroke-width="1.100"/>
    <!-- geo icon -->
    <rect x="481.200" y="-2" width="5.400" height="10" rx="1.500" fill="url(#cyl)"/>
    <circle cx="491.800" cy="5" r="3.400" fill="url(#rball)"/>
    <path d="M488 2.800l3.800 7.400c-2 1.200-5.600 1.200-7.600 0z" fill="url(#cone)"/>
    <text x="498" y="8.200" font-size="9.500" fill="#cacaca" textLength="59" lengthAdjust="spacingAndGlyphs">sphere_object1</text>
    <path d="M671.200 2.600h5.600l-2.800 4z" fill="#8a8a8a"/>
    <!-- pin -->
    <path d="M686.600 4.400h4.400M691 1.600v5.800M691.600 2.800h4.800v3.400h-4.800zM697.200 .6v7.600M698.600 .2v8.400" stroke="#cfcfcf" stroke-width="1.100" fill="#bdbdbd"/>
    <!-- target -->
    <circle cx="712.200" cy="4.800" r="6.600" fill="none" stroke="#3f66a8" stroke-width="1"/>
    <circle cx="712.200" cy="4.800" r="4.200" fill="none" stroke="#4d78c0" stroke-width="1"/>
    <circle cx="712.200" cy="4.800" r="1.900" fill="#3f7be0"/>
    <!-- menu -->
    <path d="M394.800 23.400l1.600-2.800l1.600 2.800z" fill="#0c0c0c"/>
    <g font-size="9.500" fill="#c6c6c6">
      <text x="419.900" y="30.400" textLength="16.100" lengthAdjust="spacingAndGlyphs">Add</text>
      <text x="448" y="30.400" textLength="16.800" lengthAdjust="spacingAndGlyphs">Edit</text>
      <text x="475.700" y="30.400" textLength="11.700" lengthAdjust="spacingAndGlyphs">Go</text>
      <text x="498.700" y="30.400" textLength="19.900" lengthAdjust="spacingAndGlyphs">View</text>
      <text x="530.400" y="30.400" textLength="22.600" lengthAdjust="spacingAndGlyphs">Tools</text>
      <text x="564.500" y="30.400" textLength="28.500" lengthAdjust="spacingAndGlyphs">Layout</text>
      <text x="604.700" y="30.400" textLength="19.300" lengthAdjust="spacingAndGlyphs">Help</text>
    </g>
    <!-- tools icon -->
    <path d="M663.200 32.800l10.600-10.800" stroke="#e2e2e2" stroke-width="1.300"/>
    <path d="M672.400 22.200l2.200-1.400l.8 .8l-1.400 2.200z" fill="#e8e8e8"/>
    <path d="M666.400 24.600l7.600 7.600" stroke="#d8d8d8" stroke-width="1.700"/>
    <path d="M666.800 21.400a3 3 0 1 0 1.200 4.600" fill="none" stroke="#ececec" stroke-width="2"/>
    <path d="M671.600 29.400l3.200 3.400" stroke="#f6f6f6" stroke-width="2.600" stroke-linecap="round"/>
    <!-- tree icon -->
    <path d="M684.400 22v11M684.400 24.800h6M684.400 28.600h6M684.400 32.500h6" stroke="#cfcfcf" stroke-width="1" fill="none"/>
    <g fill="#e6e6e6"><rect x="683.200" y="20.600" width="2.400" height="2.400"/><rect x="689.800" y="23.800" width="2.200" height="2"/><rect x="689.800" y="27.600" width="2.200" height="2"/><rect x="689.800" y="31.500" width="2.200" height="2"/></g>
    <!-- list icon -->
    <rect x="701" y="20.800" width="8.600" height="12.800" fill="#e4e4dc"/>
    <path d="M701 24h8.600M701 27.200h8.600M701 30.400h8.600" stroke="#a8a8a0" stroke-width="0.700"/>
    <path d="M713.400 24.600l4.800 2.800l-4.800 2.800z" fill="#8a8a8a"/>
    <!-- watermark -->
    <text x="469.700" y="61.200" font-size="15" fill="#484848" textLength="172.700" lengthAdjust="spacingAndGlyphs">Non-Commercial Edition</text>
    <text x="628.800" y="64.300" font-size="17" font-weight="bold" fill="#606060" textLength="84.800" lengthAdjust="spacingAndGlyphs">Geometry</text>
    <!-- node -->
    <circle cx="549" cy="202.800" r="39.600" fill="#48689e"/>
    <circle cx="549" cy="202.800" r="27.200" fill="#9b7ad0"/>
    <circle cx="549" cy="184.300" r="3.700" fill="#b8b8b8"/>
    <circle cx="549" cy="221.400" r="3.700" fill="#b8b8b8"/>
    <rect x="508.800" y="190.200" width="80.600" height="25.800" rx="3.600" fill="#d6d6d6"/>
    <path d="M577.400 215.500l2.200-24.800h6.400a3 3 0 0 1 3 3v18.800a3 3 0 0 1 -3 3z" fill="#00adee"/>
    <path d="M520.400 190.700l-2.200 24.800M532.800 190.700l-2.400 24.800M568.200 190.700l-2.200 24.800M579.600 190.700l-2.200 24.800" stroke="#8c8c8c" stroke-width="0.800"/>
    <rect x="508.800" y="190.200" width="80.600" height="25.800" rx="3.600" fill="none" stroke="#c99a9a" stroke-width="1"/>
    <circle cx="549.400" cy="201.500" r="9" fill="url(#nball)"/>
    <text x="597.700" y="208.400" font-size="16" fill="#d3d3d3" textLength="58.300" lengthAdjust="spacingAndGlyphs">sphere1</text>
  </svg>
</div>


<!-- ================= RIGHT PANE : parameters ================= -->
<div class="pane" id="right">
  <div class="row1"></div>
  <div class="path" style="left:43px;width:218px"></div>
  <div class="abs" style="left:0;top:18px;width:297px;height:21px;background:#3a3a3a;border-bottom:1px solid #1b1b1b"></div>
  <div class="abs" style="left:0;top:39px;width:297px;height:433px;background:#393939"></div>
  <!-- pinned button -->
  <div class="abs" style="left:266.200px;top:-2px;width:16.800px;height:15.700px;background:linear-gradient(#bcc4c8,#a9b2b6)"></div>
  <div class="abs" style="left:250.500px;top:-3px;width:11px;height:16.600px;background:linear-gradient(#2e2e2e,#272727);border:1px solid #1c1c1c;border-left-color:#2a2a2a;border-radius:0 2px 2px 0"></div>
  <!-- name field -->
  <div class="fld" style="left:54.300px;top:22px;width:153.700px;height:14.700px;background:#0e0e0e"></div>
  <!-- dropdowns -->
  <div class="abs dd" style="left:108.200px;top:40.900px;width:85.900px;height:16.600px"><i style="left:72.300px"></i></div>
  <div class="abs dd off" style="left:108.200px;top:61px;width:112.700px;height:16.500px"><i style="left:99px"></i></div>
  <div class="abs dd" style="left:108.200px;top:153.400px;width:54.700px;height:16.600px"><i style="left:41px"></i></div>
  <!-- vector fields -->
  <div class="fld" style="left:108.200px;top:81px;width:63.800px;height:15.600px"></div>
  <div class="fld" style="left:173.600px;top:81px;width:63.800px;height:15.600px"></div>
  <div class="fld" style="left:239.300px;top:81px;width:63.800px;height:15.600px"></div>
  <div class="fld" style="left:108.200px;top:98.700px;width:63.800px;height:15.900px"></div>
  <div class="fld" style="left:173.600px;top:98.700px;width:63.800px;height:15.900px"></div>
  <div class="fld" style="left:239.300px;top:98.700px;width:63.800px;height:15.900px"></div>
  <div class="fld" style="left:108.200px;top:116.700px;width:63.800px;height:15.900px"></div>
  <div class="fld" style="left:173.600px;top:116.700px;width:63.800px;height:15.900px"></div>
  <div class="fld" style="left:239.300px;top:116.700px;width:63.800px;height:15.900px"></div>
  <!-- scalar fields -->
  <div class="fld" style="left:108.200px;top:135.500px;width:54.300px;height:15.600px"></div>
  <div class="fld" style="left:108.200px;top:174px;width:54.300px;height:15.600px"></div>
  <div class="fld off" style="left:108.200px;top:192.300px;width:54.300px;height:15.900px"></div>
  <div class="fld off" style="left:108.200px;top:210.300px;width:54.300px;height:15.900px"></div>
  <div class="fld off" style="left:108.200px;top:229px;width:54.300px;height:16.600px"></div>
  <div class="fld off" style="left:108.200px;top:247.900px;width:54.300px;height:16.600px"></div>
  <!-- checkboxes -->
  <div class="abs cb" style="left:107.300px;top:268.700px"></div>
  <div class="abs cb" style="left:107.300px;top:284px"></div>
  <div class="abs cb" style="left:107.300px;top:299.400px"></div>
  <div class="abs cb" style="left:107.300px;top:315.200px"></div>

  <svg class="abs" style="left:0;top:0" width="297" height="472" viewBox="727 0 297 472" font-family="Liberation Sans, sans-serif">
    <defs>
      <radialGradient id="pball" cx="0.36" cy="0.3" r="0.8"><stop offset="0" stop-color="#f6f8fa"/><stop offset="0.55" stop-color="#a6adb4"/><stop offset="1" stop-color="#5c636a"/></radialGradient>
      <linearGradient id="hnd" x1="0" y1="0" x2="1" y2="0"><stop offset="0" stop-color="#8e8e8e"/><stop offset="0.45" stop-color="#dedede"/><stop offset="1" stop-color="#9a9a9a"/></linearGradient>
    </defs>
    <!-- nav -->
    <path d="M731.600 4.300l5.600-4.600v2.600h6v4h-6v2.600z" fill="#dadada"/>
    <path d="M741 8.800l2.600 1.800l-2.600 1.800z" fill="#8c8c8c"/>
    <path d="M762 4.300l-5.200-4.300v2.400h-5.400v3.800h5.400v2.400z" fill="#5c5c5c"/>
    <rect x="774" y="-1" width="13.200" height="5.600" fill="#1f2224"/>
    <path d="M774.400 1.400h3.400M779.400 .4h2.600M783.400 .4h3" stroke="#c9d0d2" stroke-width="1"/>
    <rect x="774" y="4.600" width="13.200" height="7.200" fill="#65777a"/>
    <path d="M776.600 6.400v3.600M779.200 6.400v3.600M776.600 8.200h2.600M781 8.400h3.400M782.700 6.800v3.200" stroke="#e6eced" stroke-width="0.900"/>
    <text x="791" y="8.200" font-size="9.500" fill="#cacaca" textLength="11.600" lengthAdjust="spacingAndGlyphs">obj</text>
    <path d="M806.800 -1l3.800 6.600l-3.800 8" fill="none" stroke="#191919" stroke-width="1.100"/>
    <rect x="816.600" y="-2" width="5.400" height="10" rx="1.500" fill="url(#cyl)"/>
    <circle cx="827.200" cy="5" r="3.400" fill="url(#rball)"/>
    <path d="M823.400 2.800l3.800 7.400c-2 1.200-5.600 1.200-7.600 0z" fill="url(#cone)"/>
    <text x="833.400" y="8.200" font-size="9.500" fill="#cacaca" textLength="59.600" lengthAdjust="spacingAndGlyphs">sphere_object1</text>
    <path d="M979.600 2.600h5.600l-2.800 4z" fill="#8a8a8a"/>
    <!-- pinned icon -->
    <path d="M1001 6.500l-3.600 4.400" stroke="#6a6a5a" stroke-width="1.200"/>
    <circle cx="1001.400" cy="5.800" r="3" fill="#e2c44e" stroke="#9a7a20" stroke-width="0.600"/>
    <circle cx="1005" cy="2.200" r="3.300" fill="#f2dc72" stroke="#9a7a20" stroke-width="0.600"/>
    <circle cx="1004.200" cy="1.400" r="1.200" fill="#fff6b0"/>
    <circle cx="1020.600" cy="4.800" r="6.600" fill="none" stroke="#3f66a8" stroke-width="1"/>
    <circle cx="1020.600" cy="4.800" r="4.200" fill="none" stroke="#4d78c0" stroke-width="1"/>
    <circle cx="1020.600" cy="4.800" r="1.900" fill="#3f7be0"/>
    <!-- operator row -->
    <circle cx="738.300" cy="28.400" r="6.400" fill="url(#pball)"/>
    <path d="M742 34.800h4l-2 2.600z" fill="#9a9a9a"/>
    <text x="748.800" y="32" font-size="9" font-weight="bold" fill="#dedede" textLength="27.600" lengthAdjust="spacingAndGlyphs">Sphere</text>
    <text x="783.200" y="31.700" font-size="9" font-family="Liberation Mono, monospace" fill="#e2e2e2" textLength="37.800" lengthAdjust="spacingAndGlyphs">sphere1</text>
    <!-- gear -->
    <g transform="translate(945 28.600)">
      <path d="M0-6v12M-6 0h12M-4.250-4.250l8.500 8.500M-4.250 4.250l8.500-8.500" stroke="#e8e8e8" stroke-width="2"/>
      <circle r="4" fill="#e8e8e8"/><circle r="1.900" fill="#3a3a3a"/>
    </g>
    <path d="M949.600 34.800h4l-2 2.600z" fill="#9a9a9a"/>
    <!-- H icon -->
    <text x="957.800" y="33.800" font-size="14" font-weight="bold" font-style="italic" fill="#0e2f60" stroke="#f0f0f0" stroke-width="1.300" paint-order="stroke" textLength="11.500" lengthAdjust="spacingAndGlyphs">H</text>
    <path d="M968.600 34.800h4l-2 2.600z" fill="#9a9a9a"/>
    <!-- search -->
    <circle cx="981.200" cy="27.200" r="4.300" fill="#56646e" stroke="#e2e2e2" stroke-width="1.400"/>
    <path d="M984.200 30.600l4.200 4.200" stroke="#e2e2e2" stroke-width="1.900"/>
    <!-- info, help -->
    <circle cx="1000.800" cy="28.400" r="5.800" fill="url(#qfill)" stroke="#e0e0e0" stroke-width="1.100"/>
    <text x="999.300" y="32" font-size="9.500" font-weight="bold" font-style="italic" fill="#ececec" font-family="Liberation Serif, serif">i</text>
    <circle cx="1020" cy="28.400" r="5.800" fill="url(#qfill)" stroke="#e0e0e0" stroke-width="1.100"/>
    <text x="1017.200" y="32" font-size="9.500" font-weight="bold" fill="#ececec">?</text>

    <!-- labels -->
    <g font-size="9.500">
      <text x="769.800" y="52.600" textLength="55" lengthAdjust="spacingAndGlyphs" fill="#c9c9c9">Primitive Type</text>
      <text x="776.600" y="72.800" textLength="48.200" lengthAdjust="spacingAndGlyphs" fill="#777">Connectivity</text>
      <text x="799" y="91.100" textLength="25.800" lengthAdjust="spacingAndGlyphs" fill="#c9c9c9">Radius</text>
      <text x="799" y="109.300" textLength="25.800" lengthAdjust="spacingAndGlyphs" fill="#c9c9c9">Center</text>
      <text x="799.500" y="126.900" textLength="25.300" lengthAdjust="spacingAndGlyphs" fill="#c9c9c9">Rotate</text>
      <text x="771.300" y="146" textLength="53.500" lengthAdjust="spacingAndGlyphs" fill="#c9c9c9">Uniform Scale</text>
      <text x="781.100" y="165.500" textLength="43.700" lengthAdjust="spacingAndGlyphs" fill="#c9c9c9">Orientation</text>
      <text x="784.800" y="184.700" textLength="40" lengthAdjust="spacingAndGlyphs" fill="#c9c9c9">Frequency</text>
      <text x="804.500" y="203.200" textLength="20.300" lengthAdjust="spacingAndGlyphs" fill="#787878">Rows</text>
      <text x="790.900" y="221.800" textLength="33.900" lengthAdjust="spacingAndGlyphs" fill="#787878">Columns</text>
      <text x="795.500" y="240.800" textLength="28.900" lengthAdjust="spacingAndGlyphs" fill="#787878">U Order</text>
      <text x="795.700" y="259.200" textLength="28.700" lengthAdjust="spacingAndGlyphs" fill="#787878">V Order</text>
      <text x="850.800" y="276.300" textLength="37" lengthAdjust="spacingAndGlyphs" fill="#8c8c8c">Imperfect</text>
      <text x="850.800" y="291.500" textLength="87.200" lengthAdjust="spacingAndGlyphs" fill="#8c8c8c">Unique Points per Pole</text>
      <text x="850.800" y="307.400" textLength="64.400" lengthAdjust="spacingAndGlyphs" fill="#8c8c8c">Accurate Bounds</text>
      <text x="850.800" y="322.600" textLength="61.700" lengthAdjust="spacingAndGlyphs" fill="#8c8c8c">Triangular Poles</text>
    </g>
    <!-- dropdown text -->
    <text x="846.500" y="52" font-size="9.500" font-weight="bold" fill="#f0f0f0" textLength="31.100" lengthAdjust="spacingAndGlyphs">Polygon</text>
    <text x="846" y="72.300" font-size="9.500" fill="#767676" textLength="54.600" lengthAdjust="spacingAndGlyphs">Quadrilaterals</text>
    <text x="845.900" y="164.800" font-size="9.500" fill="#dcdcdc" textLength="21.100" lengthAdjust="spacingAndGlyphs">Y Axis</text>
    <g fill="#bdbdbd">
      <path d="M912.300 47.600l2-3.400l2 3.400zM912.300 50.400l2 3.400l2-3.400z"/>
      <path d="M881.400 160.600l2-3.400l2 3.400zM881.400 163.400l2 3.400l2-3.400z"/>
    </g>
    <path d="M939 67.600l2-3.400l2 3.400zM939 70.400l2 3.400l2-3.400z" fill="#5a5a5a"/>
    <!-- field values -->
    <g font-family="Liberation Mono, monospace" font-size="9" font-weight="bold" fill="#ffffff">
      <text x="837.500" y="91.100" textLength="15.900" lengthAdjust="spacingAndGlyphs">0.5</text>
      <text x="903.200" y="91.100" textLength="15.900" lengthAdjust="spacingAndGlyphs">0.5</text>
      <text x="969" y="91.100" textLength="15.900" lengthAdjust="spacingAndGlyphs">0.5</text>
      <text x="837.700" y="184.700">3</text>
    </g>
    <g font-family="Liberation Mono, monospace" font-size="9" fill="#c4c4c4">
      <text x="837.500" y="109.300">0</text><text x="903.200" y="109.300">0</text><text x="969" y="109.300">0</text>
      <text x="837.500" y="126.900">0</text><text x="903.200" y="126.900">0</text><text x="969" y="126.900">0</text>
      <text x="838" y="146" fill="#ececec">1</text>
    </g>
    <g font-size="9.500" fill="#545454">
      <text x="838" y="203.300" textLength="9.400" lengthAdjust="spacingAndGlyphs">13</text>
      <text x="838" y="221.800" textLength="9.800" lengthAdjust="spacingAndGlyphs">24</text>
      <text x="838" y="240.800">4</text>
      <text x="838" y="259.200">4</text>
    </g>
    <!-- sliders -->
    <path d="M893.200 142.700H1024M893.200 181.800H1024" stroke="#0c0c0c" stroke-width="2.800"/>
    <path d="M893.200 142.700H905.500M893.200 181.800H921.500" stroke="#2c6fc6" stroke-width="1.600"/>
    <g fill="#555"><rect x="893" y="184.400" width="1" height="1"/><rect x="907.600" y="184.400" width="1" height="1"/><rect x="922.200" y="184.400" width="1" height="1"/><rect x="936.800" y="184.400" width="1" height="1"/><rect x="951.400" y="184.400" width="1" height="1"/><rect x="966" y="184.400" width="1" height="1"/><rect x="980.600" y="184.400" width="1" height="1"/><rect x="995.200" y="184.400" width="1" height="1"/><rect x="1009.800" y="184.400" width="1" height="1"/></g>
    <rect x="904.900" y="134.900" width="3.100" height="15.300" rx="0.800" fill="url(#hnd)" stroke="#1e1e1e" stroke-width="0.500"/>
    <rect x="921" y="173.400" width="3.100" height="15.700" rx="0.800" fill="url(#hnd)" stroke="#1e1e1e" stroke-width="0.500"/>
    <path d="M893.200 200H1024M893.200 218.600H1024M893.200 237.700H1024M893.200 256.200H1024" stroke="#323232" stroke-width="2.400"/>
    <g fill="#474747">
      <rect x="920.200" y="192.400" width="2.900" height="15.400"/>
      <rect x="951.300" y="210.600" width="2.900" height="15.400"/>
      <rect x="921.500" y="229.400" width="2.900" height="15.800"/>
      <rect x="921.500" y="248.200" width="2.900" height="15.800"/>
    </g>
    <!-- annotation -->
    <path d="M785.400 192.600c8 1.400 24 1.400 42-1" stroke="#07e507" stroke-width="4.200" stroke-linecap="round" fill="none"/>
    <!-- check marks -->
    <g fill="#a0a0a0">
      <path id="chk" d="M836 274.600l1.600-1.600l1.600 1.400c1.400-3 3.200-5 5.800-6.200c-1.800 2.800-3 6-3.600 9.800h-2.600c-.6-1.600-1.600-2.600-2.800-3.400z"/>
      <use href="#chk" y="30.700"/>
      <use href="#chk" y="46.500"/>
    </g>
  </svg>
</div>

<!-- pane dividers -->
<div class="div" style="left:386px;width:6.400px"></div>
<svg class="abs" style="left:385.3px;top:195px" width="8" height="60" viewBox="0 195 8 60"><g fill="#8a8a8a"><rect x="3.500" y="201.500" width="1" height="1"/><rect x="3.500" y="246.300" width="1" height="1"/><rect x="2.600" y="216.5" width="1" height="1"/><rect x="4.600" y="216.5" width="1" height="1"/><rect x="2.600" y="218.8" width="1" height="1"/><rect x="4.600" y="218.8" width="1" height="1"/><rect x="2.600" y="221.2" width="1" height="1"/><rect x="4.600" y="221.2" width="1" height="1"/><rect x="2.600" y="223.5" width="1" height="1"/><rect x="4.600" y="223.5" width="1" height="1"/><rect x="2.600" y="225.8" width="1" height="1"/><rect x="4.600" y="225.8" width="1" height="1"/><rect x="2.600" y="228.2" width="1" height="1"/><rect x="4.600" y="228.2" width="1" height="1"/><rect x="2.600" y="230.5" width="1" height="1"/><rect x="4.600" y="230.5" width="1" height="1"/></g></svg>
<div class="div" style="left:722px;width:6.400px"></div>
<svg class="abs" style="left:721.3px;top:195px" width="8" height="60" viewBox="0 195 8 60"><g fill="#8a8a8a"><rect x="3.500" y="201.500" width="1" height="1"/><rect x="3.500" y="246.300" width="1" height="1"/><rect x="2.600" y="216.5" width="1" height="1"/><rect x="4.600" y="216.5" width="1" height="1"/><rect x="2.600" y="218.8" width="1" height="1"/><rect x="4.600" y="218.8" width="1" height="1"/><rect x="2.600" y="221.2" width="1" height="1"/><rect x="4.600" y="221.2" width="1" height="1"/><rect x="2.600" y="223.5" width="1" height="1"/><rect x="4.600" y="223.5" width="1" height="1"/><rect x="2.600" y="225.8" width="1" height="1"/><rect x="4.600" y="225.8" width="1" height="1"/><rect x="2.600" y="228.2" width="1" height="1"/><rect x="4.600" y="228.2" width="1" height="1"/><rect x="2.600" y="230.5" width="1" height="1"/><rect x="4.600" y="230.5" width="1" height="1"/></g></svg>

<!-- ================= TIMELINE ================= -->
<div id="timeline">
  <div class="abs" style="left:-2px;top:5px;width:5px;height:22px;background:#484848;border:1px solid #222"></div>
  <div class="abs" style="left:4.500px;top:5px;width:9.500px;height:22px;background:#484848;border:1px solid #222"></div>
  <div class="abs" style="left:887px;top:6px;width:18.500px;height:21px;background:#464646;border:1px solid #1e1e1e"></div>
  <div class="abs" style="left:908px;top:6px;width:118px;height:21px;background:#454545;border:1px solid #1e1e1e"></div>
  <svg class="abs" style="left:0;top:0" width="1024" height="25" viewBox="0 472 1024 25" font-family="Liberation Sans, sans-serif">
    <path d="M6.400 484.600v6M8.600 484.400l4 3.200l-4 3.200z" stroke="#dcdcdc" stroke-width="1.100" fill="#dcdcdc"/>
    <path d="M0 484.600h1.600v6H0z" fill="#dcdcdc"/>
    <path d="M17.500 489.300H837.500" stroke="#8a8a8a" stroke-width="1"/>
    <path d="M17.5 484.800V492.500M58.5 485.800V492.500M99.5 485.800V492.500M140.5 485.800V492.500M181.5 485.800V492.500M222.5 484.800V492.500M263.5 485.800V492.500M304.5 485.800V492.500M345.5 485.800V492.500M386.5 485.800V492.500M427.5 485.800V492.500M468.5 484.800V492.500M509.5 485.800V492.500M550.5 485.800V492.500M591.5 485.800V492.500M632.5 485.800V492.500M673.5 485.800V492.500M714.5 484.800V492.500M755.5 485.800V492.500M796.5 485.800V492.500" stroke="#8a8a8a" stroke-width="1"/>
    <path d="M222.500 483.500V493.500M468.500 483.500V493.500M714.500 483.500V493.500" stroke="#bdbdbd" stroke-width="1"/>
    <g font-size="7.800"><text x="59.0" y="480.200" fill="#6e6e6e" textLength="4.6" lengthAdjust="spacingAndGlyphs">2</text><text x="100.0" y="480.200" fill="#6e6e6e" textLength="4.6" lengthAdjust="spacingAndGlyphs">3</text><text x="141.0" y="480.200" fill="#6e6e6e" textLength="4.6" lengthAdjust="spacingAndGlyphs">4</text><text x="182.0" y="480.200" fill="#6e6e6e" textLength="4.6" lengthAdjust="spacingAndGlyphs">5</text><text x="223.0" y="480.200" fill="#b0b0b0" textLength="4.6" lengthAdjust="spacingAndGlyphs">6</text><text x="264.0" y="480.200" fill="#6e6e6e" textLength="4.6" lengthAdjust="spacingAndGlyphs">7</text><text x="305.0" y="480.200" fill="#6e6e6e" textLength="4.6" lengthAdjust="spacingAndGlyphs">8</text><text x="346.0" y="480.200" fill="#6e6e6e" textLength="4.6" lengthAdjust="spacingAndGlyphs">9</text><text x="386.9" y="480.200" fill="#6e6e6e" textLength="9.4" lengthAdjust="spacingAndGlyphs">10</text><text x="427.9" y="480.200" fill="#6e6e6e" textLength="9.4" lengthAdjust="spacingAndGlyphs">11</text><text x="468.9" y="480.200" fill="#b0b0b0" textLength="9.4" lengthAdjust="spacingAndGlyphs">12</text><text x="509.9" y="480.200" fill="#6e6e6e" textLength="9.4" lengthAdjust="spacingAndGlyphs">13</text><text x="550.9" y="480.200" fill="#6e6e6e" textLength="9.4" lengthAdjust="spacingAndGlyphs">14</text><text x="591.9" y="480.200" fill="#6e6e6e" textLength="9.4" lengthAdjust="spacingAndGlyphs">15</text><text x="632.9" y="480.200" fill="#6e6e6e" textLength="9.4" lengthAdjust="spacingAndGlyphs">16</text><text x="673.9" y="480.200" fill="#6e6e6e" textLength="9.4" lengthAdjust="spacingAndGlyphs">17</text><text x="714.9" y="480.200" fill="#b0b0b0" textLength="9.4" lengthAdjust="spacingAndGlyphs">18</text><text x="755.9" y="480.200" fill="#6e6e6e" textLength="9.4" lengthAdjust="spacingAndGlyphs">19</text><text x="796.9" y="480.200" fill="#6e6e6e" textLength="9.4" lengthAdjust="spacingAndGlyphs">20</text></g>
    <path d="M18 473.600h17.200a1.500 1.500 0 0 1 1.500 1.500v9.200a1.500 1.500 0 0 1 -1.500 1.500h-13.600l-3.800 3.600z" fill="#060606" stroke="#e8e8e8" stroke-width="0.900"/>
    <text x="24.600" y="483.600" font-size="11" font-weight="bold" fill="#f4f4f4" font-family="Liberation Mono, monospace" textLength="5.600" lengthAdjust="spacingAndGlyphs">1</text>
    <!-- jog wheel -->
    <circle cx="857" cy="501.500" r="18.500" fill="#252525" stroke="#383838" stroke-width="1"/>
    <path d="M852 493.500l5 3.500" stroke="#5a5a5a" stroke-width="2.200" stroke-linecap="round"/>
    <path d="M873 494.500h4l-2 2.500z" fill="#7a7a7a"/>
    <!-- realtime toggle icon -->
    <path d="M890 480.500v15" stroke="#c83030" stroke-width="1.300" stroke-dasharray="2.500 2.500"/>
    <path d="M890 483v2.500M890 488v2.500" stroke="#30b040" stroke-width="1.300"/>
    <path d="M893.500 488a4 4 0 0 1 7.400-2" fill="none" stroke="#e6e6e6" stroke-width="1.300"/>
    <path d="M901.500 488.600a4 4 0 0 1 -7.400 2" fill="none" stroke="#e6e6e6" stroke-width="1.300"/>
    <path d="M899.600 483.500l2.200 3.200l-3.600 .2zM895.400 493.200l-2.200-3.200l3.600-.2z" fill="#e6e6e6"/>
    <path d="M902 493l2.400 1.600l-2.400 1.600z" fill="#999"/>
    <text x="922" y="490.400" font-size="9.500" fill="#c6c6c6" textLength="76" lengthAdjust="spacingAndGlyphs">0 keys, 0/0 channels</text>
    <path d="M1017.500 489.800l2.200-3.800l2.200 3.800z" fill="#8c8c8c"/>
  </svg>
</div>

</body>
</html>
